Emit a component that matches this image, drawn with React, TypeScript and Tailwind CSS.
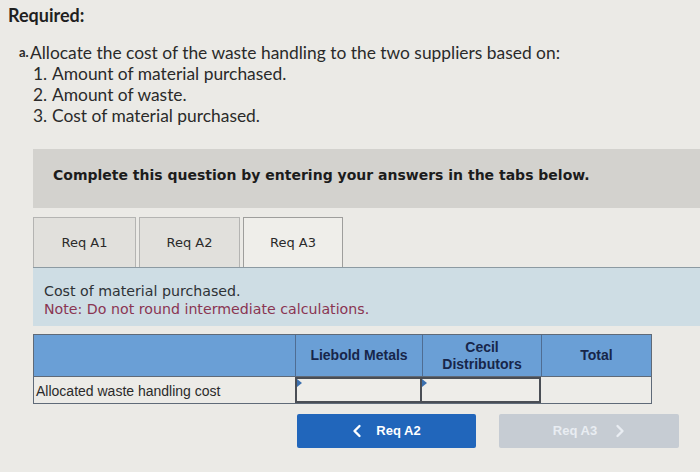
import React from "react";

const Chevron = ({ dir, className }: { dir: "l" | "r"; className?: string }) => (
  <svg width="10" height="14" viewBox="0 0 10 14" className={className}>
    <path
      d={dir === "l" ? "M7.5 2 L2.5 7 L7.5 12" : "M2.5 2 L7.5 7 L2.5 12"}
      fill="none"
      stroke="currentColor"
      strokeWidth="2.4"
      strokeLinecap="round"
      strokeLinejoin="round"
    />
  </svg>
);

const Marker = () => (
  <div className="absolute left-0 top-0 w-0 h-0 border-t-[4px] border-b-[4px] border-l-[5px] border-t-transparent border-b-transparent border-l-[#3b6fae]" />
);

export default function App() {
  return (
    <div className="w-[700px] h-[472px] overflow-hidden bg-[#ebeae6] text-[#2b2b2b]">
      {/* Required */}
      <div className="pt-[5px] pl-[8px] h-[42px] font-['Lato',sans-serif] font-bold text-[18px] leading-[20px] text-[#1f1f1f]">
        Required:
      </div>
      <div className="font-['Lato',sans-serif] text-[17.4px] leading-[21px] text-[#2a2a2a]">
        <div className="flex">
          <span className="w-[30px] pl-[19px] font-bold text-[13px]">a.</span>
          <span>Allocate the cost of the waste handling to the two suppliers based on:</span>
        </div>
        <div className="pl-[33px]">
          <div className="flex"><span className="w-[19px]">1.</span><span>Amount of material purchased.</span></div>
          <div className="flex"><span className="w-[19px]">2.</span><span>Amount of waste.</span></div>
          <div className="flex"><span className="w-[19px]">3.</span><span>Cost of material purchased.</span></div>
        </div>
      </div>

      {/* Banner */}
      <div className="ml-[33px] mt-[23px] h-[59px] bg-[#d3d2ce] pl-[20px] pt-[16px] font-['DejaVu_Sans',sans-serif] font-bold text-[14px] leading-[20px] text-[#1c1c1c]">
        Complete this question by entering your answers in the tabs below.
      </div>

      {/* Tabs */}
      <div className="ml-[33px] mt-[9px] flex gap-[3px] h-[50px] font-['DejaVu_Sans',sans-serif] text-[13px] text-[#2a2a2a]">
        <div className="w-[103px] flex items-center justify-center bg-[#e1e0dc] border border-b-0 border-[#b4b4b2]">Req A1</div>
        <div className="w-[101px] flex items-center justify-center bg-[#e1e0dc] border border-b-0 border-[#b4b4b2]">Req A2</div>
        <div className="w-[100px] flex items-center justify-center bg-[#efeeea] border border-b-0 border-[#9e9e9c]">Req A3</div>
      </div>

      {/* Blue panel */}
      <div className="ml-[33px] h-[59px] bg-[#cedde4] border-t border-[#8c9aa2] pl-[11px] pt-[14px] font-['DejaVu_Sans',sans-serif] text-[14.2px] leading-[18px]">
        <div className="text-[#2d3236]">Cost of material purchased.</div>
        <div className="text-[#8a3552]">Note: Do not round intermediate calculations.</div>
      </div>

      {/* Table */}
      <div className="ml-[33px] mt-[8px] w-[619px] border border-[#5f6a78] font-['Liberation_Sans',Arial,sans-serif]">
        <div className="flex h-[42px] bg-[#6a9fd6] text-[#17264a] font-bold text-[14px] leading-[17px] border-b border-[#5f6a78]">
          <div className="w-[261px]" />
          <div className="w-[127px] border-l border-[#4f6d93] flex items-center justify-center">Liebold Metals</div>
          <div className="w-[119px] border-l border-[#4f6d93] flex items-center justify-center text-center">Cecil<br />Distributors</div>
          <div className="flex-1 border-l border-[#4f6d93] flex items-center justify-center">Total</div>
        </div>
        <div className="flex h-[26px] bg-[#ecebe7] text-[14px] text-[#2a2a2a]">
          <div className="w-[261px] pl-[2px] pt-[2px] flex items-center">Allocated waste handling cost</div>
          <div className="relative w-[127px] border-2 border-[#4a4e55] bg-[#eeede9]"><Marker /></div>
          <div className="relative w-[119px] border-2 border-l-0 border-[#4a4e55] bg-[#eeede9]"><Marker /></div>
          <div className="flex-1 bg-[#edece8]" />
        </div>
      </div>

      {/* Buttons */}
      <div className="mt-[10px] ml-[297px] flex gap-[23px] font-['Liberation_Sans',Arial,sans-serif] font-bold text-[13px]">
        <div className="w-[179px] h-[34px] rounded-[2px] bg-[#2166bb] text-white flex items-center justify-center gap-[14px]">
          <Chevron dir="l" />
          <span>Req A2</span>
        </div>
        <div className="w-[180px] h-[34px] rounded-[2px] bg-[#c6ccd3] text-[#e9edf2] flex items-center justify-center gap-[18px]">
          <span>Req A3</span>
          <Chevron dir="r" />
        </div>
      </div>
    </div>
  );
}
